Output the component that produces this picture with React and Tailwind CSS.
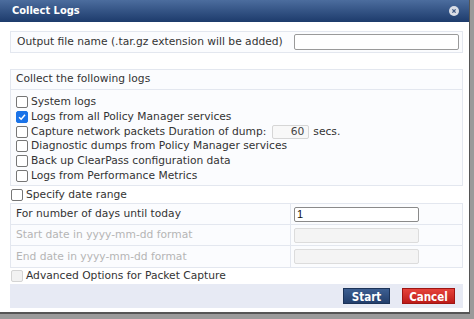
import React from 'react'

const font = { fontFamily: '"DejaVu Sans", Verdana, sans-serif' }
const btnFont = { fontFamily: '"DejaVu Sans Condensed", "DejaVu Sans", sans-serif' }

const Box = ({ checked, disabled }) => (
  <span
    className={`inline-flex items-center justify-center w-[12px] h-[12px] rounded-[2px] border shrink-0 ${
      checked
        ? 'bg-[#1a73e8] border-[#1a73e8]'
        : disabled
        ? 'bg-[#f2f2f2] border-[#d4d4d4]'
        : 'bg-white border-[#767676]'
    }`}
  >
    {checked && (
      <svg viewBox="0 0 12 12" className="w-[10px] h-[10px]">
        <path d="M2.5 6.2 L5 8.6 L9.6 3.4" fill="none" stroke="white" strokeWidth="1.8" />
      </svg>
    )}
  </span>
)

const LogRow = ({ checked, children }) => (
  <div className="flex items-center gap-[3px] h-[14.7px]">
    <Box checked={checked} />
    <span>{children}</span>
  </div>
)

export default function App() {
  return (
    <div className="w-[474px] h-[319px] bg-[#9a9a9a] text-[10.7px] text-[#333] overflow-hidden" style={font}>
      <div className="w-[470px] h-[314px] bg-white border-b-[2px] border-r-[1px] border-[#555] flex flex-col">
        <div className="h-[22px] flex items-center justify-between px-[12px] bg-gradient-to-b from-[#4c6d9e] to-[#1d3b6c]">
          <span className="text-white font-bold text-[11px]" style={btnFont}>Collect Logs</span>
          <span className="w-[10px] h-[10px] rounded-full bg-[#d9dde6] flex items-center justify-center mr-[-2px]">
            <svg viewBox="0 0 10 10" className="w-[8px] h-[8px]">
              <path d="M3 3 L7 7 M7 3 L3 7" stroke="#3a5582" strokeWidth="1.6" />
            </svg>
          </span>
        </div>

        <div className="flex-1 pl-[10px] pr-[6px] pt-[9px] flex flex-col">
          <div className="h-[22px] flex items-center justify-between border border-[#e3e7ef] bg-[#fbfcfe] pl-[6px] pr-[3px]">
            <span className="whitespace-nowrap">Output file name (.tar.gz extension will be added)</span>
            <span className="w-[165px] h-[16px] border border-[#9a9a9a] rounded-[2px] bg-white shrink-0" />
          </div>

          <div className="mt-[16px] border border-[#e3e7ef]">
            <div className="h-[20px] flex items-center pl-[5px] border-b border-[#e3e7ef] bg-[#fbfcfe]">
              Collect the following logs
            </div>
            <div className="pl-[5px] pt-[5px] pb-[2px] bg-[#fbfcfe]">
              <LogRow>System logs</LogRow>
              <LogRow checked>Logs from all Policy Manager services</LogRow>
              <div className="flex items-center gap-[3px] h-[14.7px]">
                <Box />
                <span>Capture network packets Duration of dump:</span>
                <span className="w-[37px] h-[14px] border border-[#d6d6d6] rounded-[2px] bg-[#f8f8f8] text-right pr-[4px] text-[#444] leading-[12px] ml-[3px]">
                  60
                </span>
                <span className="ml-[1px]">secs.</span>
              </div>
              <LogRow>Diagnostic dumps from Policy Manager services</LogRow>
              <LogRow>Back up ClearPass configuration data</LogRow>
              <LogRow>Logs from Performance Metrics</LogRow>
            </div>
          </div>

          <div className="flex items-center gap-[3px] h-[16px] mt-[1px] ml-[1px]">
            <Box />
            <span>Specify date range</span>
          </div>

          <div className="border border-[#e3e7ef] bg-[#fbfcfe]">
            <div className="h-[21px] flex items-center border-b border-[#e3e7ef]">
              <span className="w-[280px] pl-[5px] border-r border-[#e3e7ef] h-full flex items-center">For number of days until today</span>
              <span className="ml-[3px] w-[125px] h-[15px] border border-[#8a8a8a] rounded-[2px] bg-white text-[#111] text-[11px] leading-[13px] pl-[2px]" style={{ fontFamily: '"Liberation Sans", sans-serif' }}>
                1
              </span>
            </div>
            <div className="h-[21px] flex items-center border-b border-[#e3e7ef] text-[#b5b5b5]">
              <span className="w-[280px] pl-[5px] border-r border-[#e3e7ef] h-full flex items-center">Start date in yyyy-mm-dd format</span>
              <span className="ml-[3px] w-[125px] h-[15px] border border-[#dcdcdc] rounded-[2px] bg-[#f4f4f4]" />
            </div>
            <div className="h-[21px] flex items-center text-[#b5b5b5]">
              <span className="w-[280px] pl-[5px] border-r border-[#e3e7ef] h-full flex items-center">End date in yyyy-mm-dd format</span>
              <span className="ml-[3px] w-[125px] h-[15px] border border-[#dcdcdc] rounded-[2px] bg-[#f4f4f4]" />
            </div>
          </div>

          <div className="flex items-center gap-[3px] h-[16px] ml-[1px]">
            <Box disabled />
            <span>Advanced Options for Packet Capture</span>
          </div>

          <div className="h-[24px] bg-[#e7eaf4] flex items-center justify-end gap-[12px] pr-[8px]">
            <button className="w-[47px] h-[16px] bg-gradient-to-b from-[#3d5f92] to-[#233f6c] text-white font-bold text-[11.5px] border border-[#1c3358]" style={btnFont}>
              Start
            </button>
            <button className="w-[53px] h-[16px] bg-gradient-to-b from-[#e6423b] to-[#bd1a17] text-white font-bold text-[11.5px] border border-[#9e1512]" style={btnFont}>
              Cancel
            </button>
          </div>
        </div>
      </div>
    </div>
  )
}
